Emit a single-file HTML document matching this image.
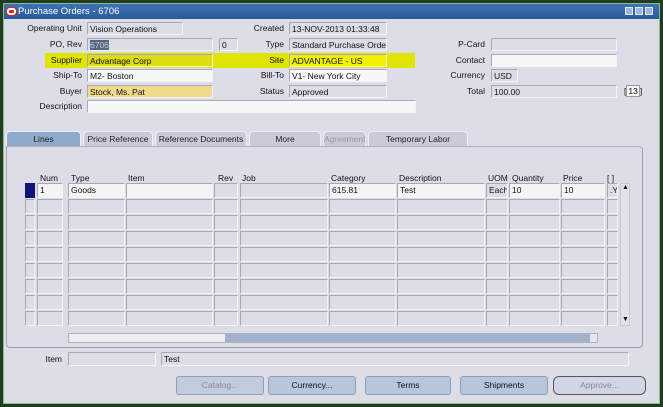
<!DOCTYPE html>
<html><head><meta charset="utf-8"><style>
*{box-sizing:border-box;margin:0;padding:0}
body{width:663px;height:407px;background:#1f3d1f;position:relative;overflow:hidden;font-family:"Liberation Sans",sans-serif;font-size:8.5px;color:#111}
#win{position:absolute;left:3px;top:3px;width:657px;height:401px;background:#dddde7;border:1px solid #8fb78f}
#title{position:absolute;left:4px;top:4px;width:655px;height:15px;background:linear-gradient(#3d73b4,#2a5a98);color:#fff;font-size:9.5px;line-height:15px;padding-left:14px}
#logo{position:absolute;left:3px;top:4px;width:9px;height:7px;border:2px solid #fff;border-radius:3px;background:#d22;box-shadow:0 0 0 1px #d22}
.wb{position:absolute;top:3px;width:8px;height:8px;background:#9fb7d7;border:1px solid #dfe8f4}
.a{position:absolute}
.l{position:absolute;text-align:right;line-height:13px}
.f{position:absolute;height:13px;line-height:12px;padding-left:2px;background:#dddde7;border:1px solid #a9a9b4;border-right-color:#f4f4f8;border-bottom-color:#f4f4f8;white-space:nowrap;overflow:hidden}
.w{background:#f7f7f7}
.tab{position:absolute;top:131px;height:15px;line-height:15px;text-align:center;background:#c9cbd8;border:1px solid #eef;border-bottom:none;border-radius:4px 4px 0 0;color:#222}
.hd{position:absolute;top:173px;line-height:10px}
.c{position:absolute;height:15px;background:#dddde7;border:1px solid #a8a8b2;border-right-color:#f3f3f8;border-bottom-color:#f3f3f8;line-height:13px;padding-left:2px;overflow:hidden;white-space:nowrap}
.btn{position:absolute;top:376px;height:19px;line-height:17px;text-align:center;background:#b7c6dc;border:1px solid #8f9fb8;border-radius:3px;color:#111}
</style></head><body>
<div id="win"></div>
<div id="title"><div id="logo"></div>Purchase Orders - 6706
<div class="wb" style="left:621px"></div><div class="wb" style="left:631px"></div><div class="wb" style="left:641px"></div></div>

<div class="a" style="left:45px;top:53px;width:370px;height:15px;background:#e0e400"></div>

<div class="l" style="left:10px;top:22px;width:72px">Operating Unit</div><div class="f" style="left:87px;top:22px;width:96px">Vision Operations</div>
<div class="l" style="left:230px;top:22px;width:54px">Created</div><div class="f" style="left:289px;top:22px;width:98px">13-NOV-2013 01:33:48</div>
<div class="l" style="left:10px;top:38px;width:72px">PO, Rev</div><div class="f" style="left:87px;top:38px;width:126px"><span style="background:#56667e;color:#ccd">6706</span></div>
<div class="f" style="left:219px;top:38px;width:19px">0</div>
<div class="l" style="left:230px;top:38px;width:54px">Type</div><div class="f" style="left:289px;top:38px;width:98px">Standard Purchase Order</div>
<div class="l" style="left:10px;top:54px;width:72px">Supplier</div><div class="f" style="left:87px;top:54px;width:126px;background:#dcdc10">Advantage Corp</div>
<div class="l" style="left:230px;top:54px;width:54px">Site</div><div class="f" style="left:289px;top:54px;width:98px;background:#f2f200">ADVANTAGE - US</div>
<div class="l" style="left:10px;top:69px;width:72px">Ship-To</div><div class="f w" style="left:87px;top:69px;width:126px">M2- Boston</div>
<div class="l" style="left:230px;top:69px;width:54px">Bill-To</div><div class="f w" style="left:289px;top:69px;width:98px">V1- New York City</div>
<div class="l" style="left:10px;top:85px;width:72px">Buyer</div><div class="f" style="left:87px;top:85px;width:126px;background:#f1d98c">Stock, Ms. Pat</div>
<div class="l" style="left:230px;top:85px;width:54px">Status</div><div class="f" style="left:289px;top:85px;width:98px">Approved</div>
<div class="l" style="left:10px;top:100px;width:72px">Description</div><div class="f w" style="left:87px;top:100px;width:329px"></div>
<div class="l" style="left:430px;top:38px;width:55px">P-Card</div><div class="f" style="left:491px;top:38px;width:126px"></div>
<div class="l" style="left:430px;top:54px;width:55px">Contact</div><div class="f w" style="left:491px;top:54px;width:126px"></div>
<div class="l" style="left:430px;top:69px;width:55px">Currency</div><div class="f" style="left:491px;top:69px;width:27px">USD</div>
<div class="l" style="left:430px;top:85px;width:55px">Total</div><div class="f" style="left:491px;top:85px;width:126px">100.00</div>
<div class="a" style="left:624px;top:85px;line-height:13px">[<span style="border:1px solid #999;background:#f4f4f4;padding:0 1px">13</span>]</div>

<div class="a" style="left:6px;top:146px;width:637px;height:202px;border:1px solid #a0a0b0;border-top-color:#b0b0c0;border-radius:0 4px 4px 4px"></div>
<div class="tab" style="left:6px;width:75px;background:#8ea9ca">Lines</div>
<div class="tab" style="left:83px;width:70px">Price Reference</div>
<div class="tab" style="left:155px;width:92px">Reference Documents</div>
<div class="tab" style="left:249px;width:72px">More</div>
<div class="tab" style="left:323px;width:43px;color:#999">Agreement</div>
<div class="tab" style="left:368px;width:100px">Temporary Labor</div>

<div class="hd" style="left:40px">Num</div><div class="hd" style="left:71px">Type</div><div class="hd" style="left:128px">Item</div><div class="hd" style="left:218px">Rev</div><div class="hd" style="left:242px">Job</div><div class="hd" style="left:331px">Category</div><div class="hd" style="left:399px">Description</div><div class="hd" style="left:488px">UOM</div><div class="hd" style="left:512px">Quantity</div><div class="hd" style="left:563px">Price</div><div class="hd" style="left:607px">[ ]</div>
<div id="grid"></div>
<div class="a" style="left:620px;top:183px;width:10px;height:143px;background:#e2e2ea;border:1px solid #c8c8d0"></div>
<div class="a" style="left:622px;top:184px;font-size:7px">▲</div><div class="a" style="left:622px;top:316px;font-size:7px">▼</div>

<div class="a" style="left:68px;top:333px;width:530px;height:10px;background:#e6e6ee;border:1px solid #b0b0bc"></div>
<div class="a" style="left:70px;top:334px;width:155px;height:8px;background:#eeeef4"></div>
<div class="a" style="left:225px;top:334px;width:365px;height:8px;background:#a3b1cc"></div>

<div class="l" style="left:30px;top:353px;width:32px">Item</div>
<div class="f" style="left:68px;top:352px;width:88px;height:14px"></div>
<div class="f" style="left:161px;top:352px;width:468px;height:14px">Test</div>

<div class="btn" style="left:176px;width:88px;color:#889;background:#c3ccdc">Catalog...</div>
<div class="btn" style="left:268px;width:88px">Currency...</div>
<div class="btn" style="left:365px;width:86px">Terms</div>
<div class="btn" style="left:460px;width:88px">Shipments</div>
<div class="btn" style="left:553px;width:93px;color:#889;background:#d0d6e2;border:1px solid #556;border-radius:6px">Approve...</div>

<script>
var cols=[[37,26],[68,57],[126,87],[214,24],[240,88],[329,67],[397,88],[486,22],[509,51],[561,44],[607,11]];
var d1=["1","Goods","","","","615.81","Test","Each","10","10",".Y"];
var h="";
for(var r=0;r<9;r++){var y=183+r*16;
h+='<div class="c" style="left:25px;top:'+y+'px;width:10px;'+(r==0?'background:#12127a;border-color:#12127a':'')+'"></div>';
for(var i=0;i<cols.length;i++){var t=r==0?d1[i]:"";var w=(r==0&&[0,1,2,5,6,8,9].indexOf(i)>=0)?'background:#f4f4f4;':'';
h+='<div class="c" style="left:'+cols[i][0]+'px;top:'+y+'px;width:'+cols[i][1]+'px;'+w+'">'+t+'</div>';}}
document.getElementById("grid").innerHTML=h;
</script>
</body></html>
